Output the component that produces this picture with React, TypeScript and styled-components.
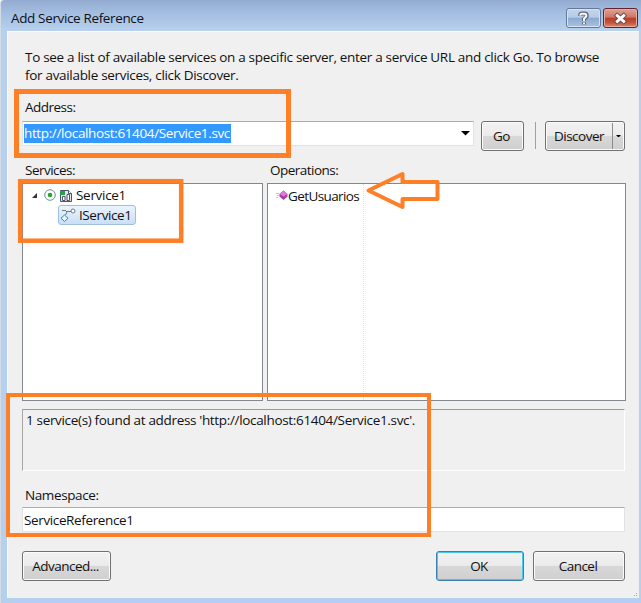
import React from "react";
import styled, { createGlobalStyle } from "styled-components";

const GlobalStyle = createGlobalStyle`
  * { box-sizing: border-box; }
  body { margin: 0; overflow: hidden; }
`;

const Window = styled.div`
  position: relative;
  width: 641px;
  height: 603px;
  display: flex;
  flex-direction: column;
  padding: 0 2px 5px 6px;
  border-left: 1px solid #d3dbe5;
  border-top-left-radius: 4px;
  background: linear-gradient(#93abd0 0, #a5bfe2 14px, #b7d0ee 30px, #b7d0ee 60px, #b5d0ee 100%);
  font-family: "Open Sans", "Noto Sans", sans-serif;
  font-size: 13.5px;
  line-height: 18px;
  color: #111;
`;

const TitleBar = styled.header`
  height: 31px;
  flex: none;
  display: flex;
  justify-content: space-between;
  padding: 8px 1px 0 4px;
`;

const Label = styled.span<{ $spacing?: number }>`
  display: block;
  white-space: nowrap;
  letter-spacing: ${(p) => p.$spacing ?? -0.52}px;
`;

const TitleLabel = styled(Label)`
  padding-top: 1px;
`;

const CaptionButtons = styled.div`
  display: flex;
  gap: 2px;
`;

const CaptionButton = styled.button<{ $danger?: boolean }>`
  width: 35px;
  height: 20px;
  padding: 0;
  display: flex;
  align-items: center;
  justify-content: center;
  border: 1px solid ${(p) => (p.$danger ? "#5e2530" : "#66799a")};
  border-radius: 3px;
  box-shadow: inset 0 0 0 1px ${(p) => (p.$danger ? "#e5ab9f" : "#d5e3f3")};
  background: ${(p) =>
    p.$danger
      ? "linear-gradient(#dfa293 0, #cf7566 46%, #b83d28 50%, #c55238 75%, #d88b70 100%)"
      : "linear-gradient(#c4d5eb 0, #b5cbe7 46%, #8ca9cf 50%, #a8c2e1 100%)"};
`;

const Client = styled.main`
  flex: 1;
  display: flex;
  flex-direction: column;
  padding: 17px 14px 0 14px;
  background: #f0f0f0;
  border-top: 1px solid #fafcff;
  border-left: 1px solid #f8fafc;
`;

const Intro = styled.div`
  height: 50px;
  padding-left: 3px;
  margin-top: -1px;
`;

const FieldLabel = styled.div`
  height: 23px;
  padding-left: 3px;
`;

const AddressRow = styled.div`
  display: flex;
  height: 40px;
  align-items: flex-start;
`;

const TextField = styled.div<{ $width?: number }>`
  width: ${(p) => (p.$width ? `${p.$width}px` : "100%")};
  height: 25px;
  display: flex;
  align-items: center;
  justify-content: space-between;
  padding: 0 3px 0 1px;
  background: #fff;
  border: 1px solid #e0e2e5;
  border-top-color: #a9abb0;
`;

const Selection = styled.span`
  height: 19px;
  padding-right: 1px;
  color: #fff;
  background: #3399ff;
`;

const Separator = styled.div`
  width: 1px;
  height: 27px;
  margin: 1px 9px 0 11px;
  background: #a0a0a0;
`;

const PushButton = styled.button<{ $width: number; $primary?: boolean }>`
  width: ${(p) => p.$width}px;
  height: 30px;
  flex: none;
  display: flex;
  align-items: center;
  justify-content: center;
  padding: 0 2px 1px 0;
  border: 1px solid ${(p) => (p.$primary ? "#3c7fb1" : "#707070")};
  border-radius: 3px;
  box-shadow: inset 0 0 0 1px ${(p) => (p.$primary ? "#48c8ee" : "#fbfbfb")};
  background: linear-gradient(#f2f2f2 0, #ebebeb 48%, #d8d8d8 50%, #cfcfcf 100%);
  color: #111;
  font: inherit;
`;

const GoButton = styled(PushButton)`
  margin-left: 7px;
`;

const SplitButton = styled(PushButton)`
  padding: 0;
`;

const SplitMain = styled.span`
  flex: 1;
  display: flex;
  justify-content: center;
`;

const SplitArrow = styled.span`
  width: 12px;
  height: 26px;
  display: flex;
  align-items: center;
  justify-content: center;
  border-left: 1px solid #8d8d8d;
`;

const ListHeadings = styled.div`
  display: grid;
  grid-template-columns: 245px 1fr;
  padding-left: 3px;
  height: 22px;
`;

const Lists = styled.div`
  display: grid;
  grid-template-columns: 241px 359px;
  gap: 4px;
  height: 218px;
`;

const ListPane = styled.section`
  background: #fff;
  border: 1px solid #828790;
`;

const ServiceTree = styled(ListPane)`
  padding: 2px 0 0 9px;
`;

const TreeRow = styled.div`
  display: flex;
  align-items: center;
  height: 19px;
`;

const TreeLabel = styled(Label)`
  margin: -1px 0 0 2px;
`;

const SelectedNode = styled.div`
  width: 78px;
  height: 20px;
  margin-left: 26px;
  display: flex;
  align-items: center;
  gap: 3px;
  padding-left: 1px;
  border: 1px solid #9fbfdc;
  border-radius: 3px;
  background: linear-gradient(#eaf4fe, #cadff5);
`;

const Operations = styled(ListPane)`
  display: grid;
  grid-template-columns: 96px 1fr;
`;

const OperationColumn = styled.div`
  display: flex;
  align-items: flex-start;
  padding: 3px 0 0 7px;
  border-right: 1px dotted #e6d8ee;
`;

const Message = styled.div`
  height: 62px;
  margin: 8px 0 15px;
  padding: 1px 0 0 3px;
  border: 1px solid #fff;
  border-top-color: #9a9a9a;
  border-left-color: #a6a6a6;
`;

const NamespaceLabel = styled(FieldLabel)`
  height: 21px;
`;

const Footer = styled.footer`
  display: flex;
  margin-top: 19px;
`;

const Advanced = styled(PushButton)`
  margin-right: auto;
`;

const Cancel = styled(PushButton)`
  margin-left: 9px;
`;

const Grip = styled.svg`
  align-self: flex-end;
  margin: 12px -13px 0 0;
`;

const Annotations = styled.svg`
  position: absolute;
  left: -1px;
  top: 0;
  pointer-events: none;
`;

const HelpIcon = () => (
  <svg width="13" height="15" viewBox="0 0 13 15" fill="none" strokeLinejoin="round">
    <path d="M3.2 5V4q0-1.5 2-1.5h2.5q2 0 2 2v1L7 8v2M7 11.3v2.2" stroke="#596779" strokeWidth="4" />
    <path d="M3.4 4.8V4q0-1.2 1.8-1.2h2.3q1.8 0 1.8 1.7v.8L7 7.8V10M7 11.6v1.6" stroke="#f8f8f8" strokeWidth="2" />
  </svg>
);

const CloseIcon = () => (
  <svg width="15" height="13" viewBox="0 0 15 13" fill="none">
    <path d="M2.5 2l10 9M12.5 2l-10 9" stroke="#664951" strokeWidth="4.8" />
    <path d="M3.2 2.6l8.6 7.8M11.8 2.6l-8.6 7.8" stroke="#fff" strokeWidth="2.8" />
  </svg>
);

const DownArrow = ({ size }: { size: number }) => (
  <svg width={size} height={size / 2} viewBox="0 0 8 4">
    <path d="M0 0h8L4 4z" fill="#000" />
  </svg>
);

const ServiceIcons = () => (
  <svg width="42" height="16" viewBox="0 0 42 16">
    <path d="M5 5v5H0z" fill="#333" />
    <circle cx="18" cy="7" r="5.3" fill="#fff" stroke="#62939b" />
    <circle cx="18" cy="7" r="2.3" fill="#28a52c" />
    <path d="M28.5 2.5h8l3 3v8h-11z" fill="#e2e7ec" stroke="#48586c" />
    <path d="M36.5 2.5v3h3" fill="#fff" stroke="#48586c" />
    <path d="M28 3h5v4h-5z" fill="#2b9c50" />
    <path d="M30.5 8.5h2.5v4h-2.5zM35 6.5h2.5v6H35z" fill="#fff" stroke="#53536d" />
  </svg>
);

const InterfaceIcon = () => (
  <svg width="16" height="16" viewBox="0 0 16 16" fill="none">
    <path d="M2 3.5h4M6 4.5h5M7 5L5.5 8" stroke="#71777c" />
    <circle cx="13" cy="4" r="2" fill="#fff" stroke="#757b82" />
    <path d="M4.5 8L8 11.2 4.5 14.5 1 11.2z" fill="#e4f6ff" stroke="#3388bd" />
  </svg>
);

const MethodIcon = () => (
  <svg width="13" height="16" viewBox="0 0 13 16">
    <path d="M1 6.5h3M2 8.5h2M1 10.5h2" stroke="#c9bccb" />
    <path d="M8.5 3.5l4 3.5v2.5l-4 3.5-4-3.5V7z" fill="#ad38b0" />
    <path d="M8.5 3.5l4 3.5-4 2.5-4-2.5z" fill="#d77dd7" />
  </svg>
);

export default function App() {
  return (
    <>
      <GlobalStyle />
      <Window>
        <TitleBar>
          <TitleLabel $spacing={-0.36}>Add Service Reference</TitleLabel>
          <CaptionButtons>
            <CaptionButton aria-label="Help"><HelpIcon /></CaptionButton>
            <CaptionButton $danger aria-label="Close"><CloseIcon /></CaptionButton>
          </CaptionButtons>
        </TitleBar>
        <Client>
          <Intro>
            <Label $spacing={-0.31}>To see a list of available services on a specific server, enter a service URL and click Go. To browse</Label>
            <Label $spacing={-0.31}>for available services, click Discover.</Label>
          </Intro>
          <FieldLabel><Label>Address:</Label></FieldLabel>
          <AddressRow>
            <TextField $width={453}>
              <Selection><Label $spacing={-0.37}>http://localhost:61404/Service1.svc</Label></Selection>
              <DownArrow size={9} />
            </TextField>
            <GoButton $width={43}><Label>Go</Label></GoButton>
            <Separator />
            <SplitButton $width={80}>
              <SplitMain><Label>Discover</Label></SplitMain>
              <SplitArrow><DownArrow size={5} /></SplitArrow>
            </SplitButton>
          </AddressRow>
          <ListHeadings>
            <Label>Services:</Label>
            <Label>Operations:</Label>
          </ListHeadings>
          <Lists>
            <ServiceTree>
              <TreeRow><ServiceIcons /><TreeLabel $spacing={-0.3}>Service1</TreeLabel></TreeRow>
              <SelectedNode><InterfaceIcon /><Label $spacing={-0.4}>IService1</Label></SelectedNode>
            </ServiceTree>
            <Operations>
              <OperationColumn><MethodIcon /><Label $spacing={-0.6}>GetUsuarios</Label></OperationColumn>
            </Operations>
          </Lists>
          <Message><Label $spacing={-0.33}>1 service(s) found at address 'http://localhost:61404/Service1.svc'.</Label></Message>
          <NamespaceLabel><Label $spacing={-0.4}>Namespace:</Label></NamespaceLabel>
          <TextField><Label $spacing={-0.37}>ServiceReference1</Label></TextField>
          <Footer>
            <Advanced $width={89}><Label>Advanced...</Label></Advanced>
            <PushButton $width={88} $primary><Label>OK</Label></PushButton>
            <Cancel $width={92}><Label>Cancel</Label></Cancel>
          </Footer>
          <Grip width="4" height="4"><path d="M2 0h1v1H2zM0 2h1v1H0zM2 2h1v1H2z" fill="#a0a6ae" /></Grip>
        </Client>
        <Annotations width="641" height="603" fill="none" stroke="#ff7f27">
          <rect x="16.5" y="91.5" width="272" height="64" strokeWidth="5" />
          <rect x="20.2" y="181.2" width="161" height="59.5" strokeWidth="4.5" />
          <rect x="8" y="395" width="421" height="140" strokeWidth="4" />
          <path d="M368.5 190.5l34-16.5v8h35v17h-35v8z" strokeWidth="4" strokeLinejoin="round" />
        </Annotations>
      </Window>
    </>
  );
}
